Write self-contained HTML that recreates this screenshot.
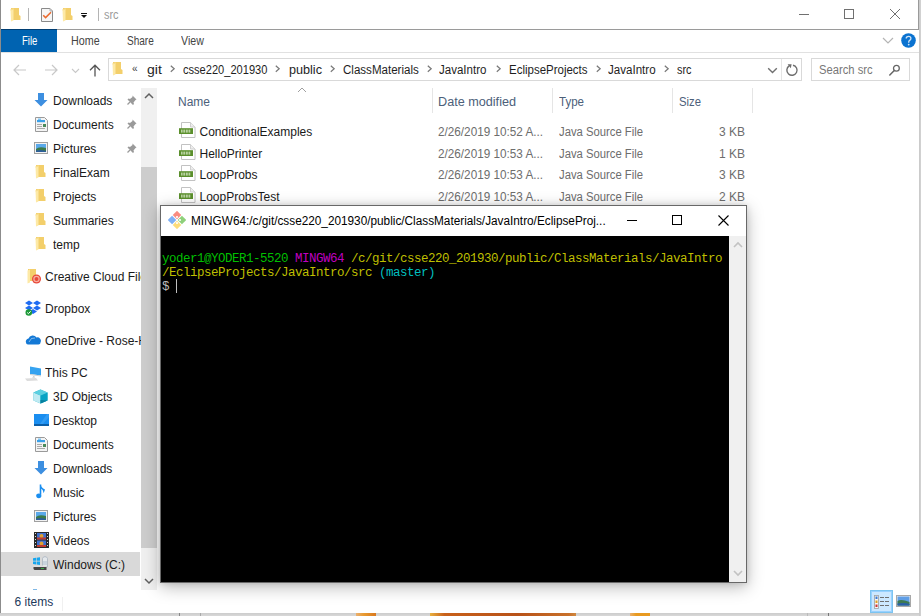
<!DOCTYPE html>
<html><head><meta charset="utf-8">
<style>
*{box-sizing:border-box;margin:0;padding:0}
html,body{width:921px;height:616px;overflow:hidden;background:#fff}
body{position:relative;font-family:"Liberation Sans",sans-serif;font-size:12px;color:#000}
.a{position:absolute}
.t{position:absolute;white-space:nowrap;line-height:14px}
.hl{position:absolute;height:1px}
.vl{position:absolute;width:1px}
.m{position:absolute;white-space:pre;font-family:"Liberation Mono",monospace;font-size:12.5px;letter-spacing:-0.5px;line-height:14px}
</style></head>
<body>
<div class="a" style="left:0;top:612px;width:921px;height:4px;background:linear-gradient(#c8c8c8,#d8d8d8)"></div>
<div class="a" style="left:356px;top:613px;width:20px;height:3px;background:linear-gradient(90deg,#eab070,#e89a30 40%,#d9781e)"></div>
<div class="a" style="left:430px;top:613px;width:146px;height:3px;background:linear-gradient(90deg,#e8b040,#c8601a 10%,#b85218 60%,#c8702a 95%,#d08840)"></div>
<div class="a" style="left:630px;top:613px;width:20px;height:3px;background:linear-gradient(90deg,#eab070,#e89a20 30%,#e89a20)"></div>
<div class="vl" style="left:179px;top:613px;height:3px;background:#888"></div>
<div class="vl" style="left:200px;top:613px;height:3px;background:#aaa"></div>
<div class="vl" style="left:807px;top:613px;height:3px;background:#bbb"></div>
<div class="vl" style="left:828px;top:613px;height:3px;background:#777"></div>
<div class="a" style="left:0;top:0;width:919px;height:613px;background:#fff"></div>
<div class="a" style="left:919px;top:0;width:2px;height:616px;background:linear-gradient(90deg,#c8c8c8,#d4d4d4)"></div>
<div class="vl" style="left:0;top:0;height:613px;background:#8c8c8c"></div>
<div class="hl" style="left:0;top:29px;width:919px;background:#9a9a9a"></div>
<div class="vl" style="left:918px;top:0;height:30px;background:#9a9a9a"></div>
<svg class="a" style="left:10px;top:8px" width="11" height="14" viewBox="0 0 11 14"><path d="M1 0H9V7L10.5 8V12H2Z" fill="#f3cf6b"/><path d="M0.5 1.5L3.5 0.5V12.5L1 13.5Z" fill="#fde9a6"/><path d="M0.5 1.5L3.5 0.5V1.5L0.5 2.5Z" fill="#f7dc8a"/></svg>
<div class="vl" style="left:28px;top:8px;height:13px;background:#b4b4b4"></div>
<svg class="a" style="left:41px;top:8px" width="12" height="15" viewBox="0 0 12 15"><path d="M0.5 0.5H9L11.5 3V13.5H0.5Z" fill="#f6f6f6" stroke="#8a8a8a"/><path d="M9 0.5V3H11.5" fill="none" stroke="#b0b0b0"/></svg>
<svg class="a" style="left:41px;top:8px" width="12" height="15" viewBox="0 0 12 15"><path d="M2.2 7.2L4.6 9.6L10 4.2" stroke="#ea6a2e" stroke-width="1.5" fill="none"/></svg>
<svg class="a" style="left:62px;top:8px" width="11" height="14" viewBox="0 0 11 14"><path d="M1 0H9V7L10.5 8V12H2Z" fill="#f3cf6b"/><path d="M0.5 1.5L3.5 0.5V12.5L1 13.5Z" fill="#fde9a6"/><path d="M0.5 1.5L3.5 0.5V1.5L0.5 2.5Z" fill="#f7dc8a"/></svg>
<div class="a" style="left:81px;top:13px;width:6px;height:1px;background:#111"></div>
<svg class="a" style="left:81px;top:15px" width="6" height="4" viewBox="0 0 6 4"><path d="M0 0 L6 0 L3 3Z" fill="#111"/></svg>
<div class="vl" style="left:98px;top:8px;height:13px;background:#b4b4b4"></div>
<div class="t" style="left:104px;top:7.84px;color:#9b9b9b;font-size:12px;transform:scaleX(0.9125);transform-origin:0 0;">src</div>
<div class="hl" style="left:799px;top:14px;width:10px;background:#707070"></div>
<div class="a" style="left:844px;top:9px;width:10px;height:10px;border:1px solid #707070"></div>
<svg class="a" style="left:890px;top:9px" width="10" height="10" viewBox="0 0 10 10"><path d="M0 0L10 10M10 0L0 10" stroke="#707070" stroke-width="1"/></svg>
<div class="a" style="left:1px;top:29px;width:56px;height:23px;background:#0063b1;border-top:1px solid #003e73"></div>
<div class="t" style="left:21.5px;top:34.34px;color:#fff;font-size:12px;transform:scaleX(0.7961);transform-origin:0 0;">File</div>
<div class="t" style="left:70.7px;top:34.34px;color:#444;font-size:12px;transform:scaleX(0.8933);transform-origin:0 0;">Home</div>
<div class="t" style="left:126.6px;top:34.34px;color:#444;font-size:12px;transform:scaleX(0.8371);transform-origin:0 0;">Share</div>
<div class="t" style="left:181px;top:34.34px;color:#444;font-size:12px;transform:scaleX(0.8838);transform-origin:0 0;">View</div>
<div class="hl" style="left:1px;top:52px;width:918px;background:#e1e1e1"></div>
<svg class="a" style="left:882px;top:37px" width="12" height="8" viewBox="0 0 12 8"><path d="M1 1L6 6L11 1" stroke="#b4b4b4" stroke-width="1.2" fill="none"/></svg>
<svg class="a" style="left:901px;top:33px" width="15" height="15" viewBox="0 0 15 15"><circle cx="7.5" cy="7.5" r="7.3" fill="#0a72d0"/><path d="M5.2 5.6Q5.2 3.4 7.6 3.4Q9.9 3.4 9.9 5.4Q9.9 6.6 8.6 7.4Q7.7 8 7.7 9.2V9.7" stroke="#cfe3f6" stroke-width="1.3" fill="none"/><circle cx="7.7" cy="11.6" r="0.9" fill="#cfe3f6"/></svg>
<svg class="a" style="left:13px;top:64px" width="14" height="12" viewBox="0 0 14 12"><path d="M1 6H13M6 1L1 6L6 11" stroke="#c8c8c8" stroke-width="1.2" fill="none"/></svg>
<svg class="a" style="left:44px;top:64px" width="14" height="12" viewBox="0 0 14 12"><path d="M1 6H13M8 1L13 6L8 11" stroke="#c8c8c8" stroke-width="1.2" fill="none"/></svg>
<svg class="a" style="left:71px;top:68px" width="9" height="6" viewBox="0 0 9 6"><path d="M1 1L4.5 4.5L8 1" stroke="#c8c8c8" stroke-width="1.1" fill="none"/></svg>
<svg class="a" style="left:89px;top:64px" width="12" height="13" viewBox="0 0 12 13"><path d="M6 12.5V1.2M1 6.2L6 1.2L11 6.2" stroke="#555" stroke-width="1.3" fill="none"/></svg>
<div class="a" style="left:108px;top:58px;width:694px;height:23px;border:1px solid #d9d9d9"></div>
<div class="vl" style="left:781px;top:59px;height:21px;background:#e5e5e5"></div>
<svg class="a" style="left:112px;top:62px" width="11" height="14" viewBox="0 0 11 14"><path d="M1 0H9V7L10.5 8V12H2Z" fill="#f3cf6b"/><path d="M0.5 1.5L3.5 0.5V12.5L1 13.5Z" fill="#fde9a6"/><path d="M0.5 1.5L3.5 0.5V1.5L0.5 2.5Z" fill="#f7dc8a"/></svg>
<div class="t" style="left:132px;top:62.03px;color:#444;font-size:10px;">«</div>
<div class="t" style="left:146.7px;top:62.84px;color:#1e1e1e;font-size:12px;transform:scaleX(1.1679);transform-origin:0 0;">git</div>
<div class="t" style="left:182.6px;top:62.84px;color:#1e1e1e;font-size:12px;transform:scaleX(0.9235);transform-origin:0 0;">csse220_201930</div>
<div class="t" style="left:288.6px;top:62.84px;color:#1e1e1e;font-size:12px;transform:scaleX(1.0523);transform-origin:0 0;">public</div>
<div class="t" style="left:342.5px;top:62.84px;color:#1e1e1e;font-size:12px;transform:scaleX(0.9631);transform-origin:0 0;">ClassMaterials</div>
<div class="t" style="left:439.4px;top:62.84px;color:#1e1e1e;font-size:12px;transform:scaleX(0.9606);transform-origin:0 0;">JavaIntro</div>
<div class="t" style="left:508.5px;top:62.84px;color:#1e1e1e;font-size:12px;transform:scaleX(0.9570);transform-origin:0 0;">EclipseProjects</div>
<div class="t" style="left:607.7px;top:62.84px;color:#1e1e1e;font-size:12px;transform:scaleX(0.9647);transform-origin:0 0;">JavaIntro</div>
<div class="t" style="left:676.7px;top:62.84px;color:#1e1e1e;font-size:12px;transform:scaleX(0.9062);transform-origin:0 0;">src</div>
<svg class="a" style="left:170px;top:65px" width="6" height="8" viewBox="0 0 6 8"><path d="M0.8 0.8L4.2 3.8L0.8 6.8" stroke="#777" stroke-width="1.2" fill="none"/></svg>
<svg class="a" style="left:275px;top:65px" width="6" height="8" viewBox="0 0 6 8"><path d="M0.8 0.8L4.2 3.8L0.8 6.8" stroke="#777" stroke-width="1.2" fill="none"/></svg>
<svg class="a" style="left:330px;top:65px" width="6" height="8" viewBox="0 0 6 8"><path d="M0.8 0.8L4.2 3.8L0.8 6.8" stroke="#777" stroke-width="1.2" fill="none"/></svg>
<svg class="a" style="left:427px;top:65px" width="6" height="8" viewBox="0 0 6 8"><path d="M0.8 0.8L4.2 3.8L0.8 6.8" stroke="#777" stroke-width="1.2" fill="none"/></svg>
<svg class="a" style="left:496px;top:65px" width="6" height="8" viewBox="0 0 6 8"><path d="M0.8 0.8L4.2 3.8L0.8 6.8" stroke="#777" stroke-width="1.2" fill="none"/></svg>
<svg class="a" style="left:596px;top:65px" width="6" height="8" viewBox="0 0 6 8"><path d="M0.8 0.8L4.2 3.8L0.8 6.8" stroke="#777" stroke-width="1.2" fill="none"/></svg>
<svg class="a" style="left:664px;top:65px" width="6" height="8" viewBox="0 0 6 8"><path d="M0.8 0.8L4.2 3.8L0.8 6.8" stroke="#777" stroke-width="1.2" fill="none"/></svg>
<svg class="a" style="left:767px;top:67px" width="11" height="7" viewBox="0 0 11 7"><path d="M1.2 1.2L5.5 5.5L9.8 1.2" stroke="#707070" stroke-width="1.4" fill="none"/></svg>
<svg class="a" style="left:785px;top:63px" width="14" height="14" viewBox="0 0 14 14"><path d="M8 2.2A5.1 5.1 0 1 1 4.2 2.9" stroke="#6d6d6d" stroke-width="1.4" fill="none"/><path d="M2.6 1.2L6.6 1.2L5.8 5.2Z" fill="#6d6d6d"/></svg>
<div class="a" style="left:811px;top:58px;width:99px;height:23px;border:1px solid #d9d9d9"></div>
<div class="t" style="left:819px;top:62.84px;color:#777;font-size:12px;transform:scaleX(0.9347);transform-origin:0 0;">Search src</div>
<svg class="a" style="left:888px;top:64px" width="12" height="12" viewBox="0 0 12 12"><circle cx="8.4" cy="4.3" r="2.9" stroke="#666" stroke-width="1.3" fill="none"/><path d="M6.3 6.5L1.8 11" stroke="#666" stroke-width="1.5" stroke-linecap="round"/></svg>
<div class="a" style="left:141px;top:88px;width:16px;height:502px;background:#f0f0f0"></div>
<div class="a" style="left:141px;top:167px;width:16px;height:381px;background:#cdcdcd"></div>
<svg class="a" style="left:144px;top:92px" width="10" height="7" viewBox="0 0 10 7"><path d="M1 6L5 2L9 6" stroke="#606060" stroke-width="1.5" fill="none"/></svg>
<svg class="a" style="left:144px;top:578px" width="10" height="7" viewBox="0 0 10 7"><path d="M1 1L5 5L9 1" stroke="#606060" stroke-width="1.5" fill="none"/></svg>
<div class="a" style="left:1px;top:552px;width:139px;height:24px;background:#d9d9d9"></div>
<div class="t" style="left:53px;top:93.84px;color:#1a1a1a;font-size:12px;width:88px;overflow:hidden">Downloads</div>
<svg class="a" style="left:34px;top:93px" width="14" height="14" viewBox="0 0 14 14"><path d="M4 0H10V7H13.5L7 13.5L0.5 7H4Z" fill="#3d8fe0"/></svg>
<svg class="a" style="left:127px;top:95px" width="10" height="10" viewBox="0 0 10 10"><path d="M5.5 0.5L9.5 4.5L8.5 5L6.5 7.5L7 9L6 10L0.5 4.5L1.5 3.5L3 4L5.5 2Z" fill="#9a9a9a"/><path d="M3 7L0.5 9.5" stroke="#9a9a9a" stroke-width="1.2"/></svg>
<div class="t" style="left:53px;top:117.84px;color:#1a1a1a;font-size:12px;width:88px;overflow:hidden">Documents</div>
<svg class="a" style="left:35px;top:117px" width="13" height="15" viewBox="0 0 13 15"><path d="M0.5 0.5H9.5L12.5 3.5V14.5H0.5Z" fill="#f4f4f4" stroke="#9a9a9a"/><rect x="2" y="3" width="8" height="2.2" fill="#3aa0e8"/><rect x="3" y="1.5" width="3" height="1.5" fill="#7cc4f5"/><rect x="2" y="7" width="5" height="1" fill="#aaa"/><rect x="2" y="9" width="5" height="1" fill="#aaa"/><rect x="2" y="11" width="8" height="1" fill="#aaa"/><rect x="8" y="7" width="3" height="3" fill="#4a8a5a"/></svg>
<svg class="a" style="left:127px;top:119px" width="10" height="10" viewBox="0 0 10 10"><path d="M5.5 0.5L9.5 4.5L8.5 5L6.5 7.5L7 9L6 10L0.5 4.5L1.5 3.5L3 4L5.5 2Z" fill="#9a9a9a"/><path d="M3 7L0.5 9.5" stroke="#9a9a9a" stroke-width="1.2"/></svg>
<div class="t" style="left:53px;top:141.84px;color:#1a1a1a;font-size:12px;width:88px;overflow:hidden">Pictures</div>
<svg class="a" style="left:34px;top:142px" width="14" height="12" viewBox="0 0 14 12"><rect x="0.5" y="0.5" width="13" height="11" fill="#f2f2f2" stroke="#a0a0a0"/><rect x="2" y="2" width="10" height="8" fill="#5aa9ea"/><path d="M2 7Q5 4 12 6V10H2Z" fill="#3c7a4a"/><path d="M2 8.5Q7 7.5 12 9V10H2Z" fill="#2d5f9a"/></svg>
<svg class="a" style="left:127px;top:143px" width="10" height="10" viewBox="0 0 10 10"><path d="M5.5 0.5L9.5 4.5L8.5 5L6.5 7.5L7 9L6 10L0.5 4.5L1.5 3.5L3 4L5.5 2Z" fill="#9a9a9a"/><path d="M3 7L0.5 9.5" stroke="#9a9a9a" stroke-width="1.2"/></svg>
<div class="t" style="left:53px;top:165.84px;color:#1a1a1a;font-size:12px;width:88px;overflow:hidden">FinalExam</div>
<svg class="a" style="left:35px;top:165px" width="11" height="14" viewBox="0 0 11 14"><path d="M1 0H9V7L10.5 8V12H2Z" fill="#f3cf6b"/><path d="M0.5 1.5L3.5 0.5V12.5L1 13.5Z" fill="#fde9a6"/><path d="M0.5 1.5L3.5 0.5V1.5L0.5 2.5Z" fill="#f7dc8a"/></svg>
<div class="t" style="left:53px;top:189.84px;color:#1a1a1a;font-size:12px;width:88px;overflow:hidden">Projects</div>
<svg class="a" style="left:35px;top:189px" width="11" height="14" viewBox="0 0 11 14"><path d="M1 0H9V7L10.5 8V12H2Z" fill="#f3cf6b"/><path d="M0.5 1.5L3.5 0.5V12.5L1 13.5Z" fill="#fde9a6"/><path d="M0.5 1.5L3.5 0.5V1.5L0.5 2.5Z" fill="#f7dc8a"/></svg>
<div class="t" style="left:53px;top:213.84px;color:#1a1a1a;font-size:12px;width:88px;overflow:hidden">Summaries</div>
<svg class="a" style="left:35px;top:213px" width="11" height="14" viewBox="0 0 11 14"><path d="M1 0H9V7L10.5 8V12H2Z" fill="#f3cf6b"/><path d="M0.5 1.5L3.5 0.5V12.5L1 13.5Z" fill="#fde9a6"/><path d="M0.5 1.5L3.5 0.5V1.5L0.5 2.5Z" fill="#f7dc8a"/></svg>
<div class="t" style="left:53px;top:237.84px;color:#1a1a1a;font-size:12px;width:88px;overflow:hidden">temp</div>
<svg class="a" style="left:35px;top:237px" width="11" height="14" viewBox="0 0 11 14"><path d="M1 0H9V7L10.5 8V12H2Z" fill="#f3cf6b"/><path d="M0.5 1.5L3.5 0.5V12.5L1 13.5Z" fill="#fde9a6"/><path d="M0.5 1.5L3.5 0.5V1.5L0.5 2.5Z" fill="#f7dc8a"/></svg>
<div class="t" style="left:45px;top:269.84px;color:#1a1a1a;font-size:12px;width:96px;overflow:hidden">Creative Cloud Files</div>
<svg class="a" style="left:27px;top:269px" width="16" height="16" viewBox="0 0 16 16"><path d="M1 0H9V12H1Z" fill="#f3cf6b"/><path d="M0.5 1.5L3 0.5V13.5L0.5 14.5Z" fill="#fde9a6"/><circle cx="9.5" cy="10" r="4.5" fill="#e8493a"/><circle cx="9.5" cy="10" r="2.6" fill="none" stroke="#f7b0a0" stroke-width="1.2"/></svg>
<div class="t" style="left:45px;top:301.84px;color:#1a1a1a;font-size:12px;width:96px;overflow:hidden">Dropbox</div>
<svg class="a" style="left:25px;top:300px" width="17" height="16" viewBox="0 0 17 16"><path d="M4 0.5L8 3L4 5.5L0 3Z M12 0.5L16 3L12 5.5L8 3Z M4 5.5L8 8L4 10.5L0 8Z M12 5.5L16 8L12 10.5L8 8Z M8 9L12 11.5L8 14L4 11.5Z" fill="#1f6cf2"/><circle cx="3.8" cy="12.5" r="3.3" fill="#1e9a3a"/><path d="M2.2 12.5L3.4 13.7L5.6 11.3" stroke="#fff" stroke-width="1" fill="none"/></svg>
<div class="t" style="left:45px;top:333.84px;color:#1a1a1a;font-size:12px;width:96px;overflow:hidden">OneDrive - Rose-Hulman</div>
<svg class="a" style="left:25px;top:334px" width="16" height="11" viewBox="0 0 16 11"><path d="M1 8.5A3 3 0 0 1 3.5 4.5A4.5 4.5 0 0 1 11.5 3.5A3.5 3.5 0 0 1 15.5 8.5A2 2 0 0 1 13.5 10.5H3A2 2 0 0 1 1 8.5Z" fill="#1479d6"/><path d="M4 8Q6 3 10 4" stroke="#fff" stroke-width="0.8" fill="none" opacity="0.6"/></svg>
<div class="t" style="left:45px;top:365.84px;color:#1a1a1a;font-size:12px;width:96px;overflow:hidden">This PC</div>
<svg class="a" style="left:25px;top:366px" width="17" height="15" viewBox="0 0 17 15"><path d="M5 0.5L16 2.5V9.5L5 8Z" fill="#36a3f0"/><path d="M5 8L16 9.5V10.5L5 9Z" fill="#d0d0d0"/><path d="M0 12.5L11 12L13 14.5L2 15Z" fill="#dcdcdc"/><path d="M9 10L10 11.5H7Z" fill="#bbb"/></svg>
<div class="t" style="left:53px;top:389.84px;color:#1a1a1a;font-size:12px;width:88px;overflow:hidden">3D Objects</div>
<svg class="a" style="left:33px;top:389px" width="15" height="15" viewBox="0 0 15 15"><path d="M7.5 0.5L14.5 3.5V11.5L7.5 14.5L0.5 11.5V3.5Z" fill="#23b6cc"/><path d="M0.5 3.5L7.5 6.5V14.5L0.5 11.5Z" fill="#bfeaf2"/><path d="M7.5 6.5L14.5 3.5V11.5L7.5 14.5Z" fill="#0aa3c4"/><path d="M0.5 3.5L7.5 0.5L14.5 3.5L7.5 6.5Z" fill="#5ccfe0"/><path d="M7.5 11L14.5 11.5L7.5 14.5Z" fill="#087f9e"/></svg>
<div class="t" style="left:53px;top:413.84px;color:#1a1a1a;font-size:12px;width:88px;overflow:hidden">Desktop</div>
<svg class="a" style="left:34px;top:414px" width="15" height="12" viewBox="0 0 15 12"><rect x="0" y="0" width="15" height="12" fill="#1a8ef0"/><rect x="0" y="10" width="15" height="2" fill="#0b5ea8"/><path d="M6 10L13 0H15V3L9 10Z" fill="#4aaaf7" opacity="0.5"/></svg>
<div class="t" style="left:53px;top:437.84px;color:#1a1a1a;font-size:12px;width:88px;overflow:hidden">Documents</div>
<svg class="a" style="left:35px;top:437px" width="13" height="15" viewBox="0 0 13 15"><path d="M0.5 0.5H9.5L12.5 3.5V14.5H0.5Z" fill="#f4f4f4" stroke="#9a9a9a"/><rect x="2" y="3" width="8" height="2.2" fill="#3aa0e8"/><rect x="3" y="1.5" width="3" height="1.5" fill="#7cc4f5"/><rect x="2" y="7" width="5" height="1" fill="#aaa"/><rect x="2" y="9" width="5" height="1" fill="#aaa"/><rect x="2" y="11" width="8" height="1" fill="#aaa"/><rect x="8" y="7" width="3" height="3" fill="#4a8a5a"/></svg>
<div class="t" style="left:53px;top:461.84px;color:#1a1a1a;font-size:12px;width:88px;overflow:hidden">Downloads</div>
<svg class="a" style="left:34px;top:461px" width="14" height="14" viewBox="0 0 14 14"><path d="M4 0H10V7H13.5L7 13.5L0.5 7H4Z" fill="#3d8fe0"/></svg>
<div class="t" style="left:53px;top:485.84px;color:#1a1a1a;font-size:12px;width:88px;overflow:hidden">Music</div>
<svg class="a" style="left:36px;top:484px" width="10" height="15" viewBox="0 0 10 15"><path d="M4.5 0.5V10.5" stroke="#1a8ef0" stroke-width="1.6"/><ellipse cx="2.8" cy="11.8" rx="2.6" ry="2.4" fill="#1a8ef0"/><path d="M4.5 0.5Q5 3.5 9 5.5Q8.5 8 7 9Q8 6 4.5 4.5Z" fill="#1a8ef0"/></svg>
<div class="t" style="left:53px;top:509.84px;color:#1a1a1a;font-size:12px;width:88px;overflow:hidden">Pictures</div>
<svg class="a" style="left:34px;top:510px" width="14" height="12" viewBox="0 0 14 12"><rect x="0.5" y="0.5" width="13" height="11" fill="#f2f2f2" stroke="#a0a0a0"/><rect x="2" y="2" width="10" height="8" fill="#5aa9ea"/><path d="M2 7Q5 4 12 6V10H2Z" fill="#3c7a4a"/><path d="M2 8.5Q7 7.5 12 9V10H2Z" fill="#2d5f9a"/></svg>
<div class="t" style="left:53px;top:533.84px;color:#1a1a1a;font-size:12px;width:88px;overflow:hidden">Videos</div>
<svg class="a" style="left:34px;top:532px" width="15" height="16" viewBox="0 0 15 16"><rect x="0" y="0" width="15" height="16" fill="#2a2a2a"/><rect x="3" y="1" width="9" height="6.5" fill="#3e6fd0"/><rect x="3" y="8.5" width="9" height="6.5" fill="#3e6fd0"/><circle cx="7.5" cy="4" r="2" fill="#e0a030"/><circle cx="7.5" cy="11.5" r="2" fill="#e0a030"/><rect x="3" y="5.5" width="9" height="2" fill="#c03a30"/><rect x="3" y="13" width="9" height="2" fill="#c03a30"/><g fill="#ddd"><rect x="1" y="1" width="1" height="1"/><rect x="1" y="4" width="1" height="1"/><rect x="1" y="7" width="1" height="1"/><rect x="1" y="10" width="1" height="1"/><rect x="1" y="13" width="1" height="1"/><rect x="13" y="1" width="1" height="1"/><rect x="13" y="4" width="1" height="1"/><rect x="13" y="7" width="1" height="1"/><rect x="13" y="10" width="1" height="1"/><rect x="13" y="13" width="1" height="1"/></g></svg>
<div class="t" style="left:53px;top:557.84px;color:#1a1a1a;font-size:12px;width:88px;overflow:hidden">Windows (C:)</div>
<svg class="a" style="left:32px;top:556px" width="18" height="16" viewBox="0 0 18 16"><g fill="#16a6ee"><path d="M1 2.2L4 1.8V4.8H1Z"/><path d="M4.6 1.7L8 1.2V4.8H4.6Z"/><path d="M1 5.4H4V8.4L1 8Z"/><path d="M4.6 5.4H8V9L4.6 8.5Z"/></g><path d="M10.5 2.5A2.6 2.6 0 0 1 15.5 2.5V11H10.5Z" fill="#e4e8ec" stroke="#a9b4bf" stroke-width="0.8"/><path d="M11 6H15M11 8H15" stroke="#9fb6c9" stroke-width="0.8"/><path d="M1 9.5H13L14.5 11H2.5Z" fill="#e0e0e0"/><path d="M1.5 11H14.5V14H2.5L1.5 13Z" fill="#454545"/><rect x="9" y="12" width="3" height="1" fill="#3cb04a"/></svg>
<div class="t" style="left:178.3px;top:95.04px;color:#4c607a;font-size:12px;transform:scaleX(0.9995);transform-origin:0 0;">Name</div>
<div class="t" style="left:438.4px;top:95.04px;color:#4c607a;font-size:12px;transform:scaleX(1.0536);transform-origin:0 0;">Date modified</div>
<div class="t" style="left:558.5px;top:95.04px;color:#4c607a;font-size:12px;transform:scaleX(0.9610);transform-origin:0 0;">Type</div>
<div class="t" style="left:678.7px;top:95.04px;color:#4c607a;font-size:12px;transform:scaleX(0.9424);transform-origin:0 0;">Size</div>
<div class="vl" style="left:432px;top:88px;height:25px;background:#e5e5e5"></div>
<div class="vl" style="left:552px;top:88px;height:25px;background:#e5e5e5"></div>
<div class="vl" style="left:672px;top:88px;height:25px;background:#e5e5e5"></div>
<div class="vl" style="left:752px;top:88px;height:25px;background:#e5e5e5"></div>
<svg class="a" style="left:297px;top:87px" width="10" height="6" viewBox="0 0 10 6"><path d="M1 5L5 1L9 5" stroke="#a0a0a0" stroke-width="1" fill="none"/></svg>
<svg class="a" style="left:179px;top:122.2px" width="17" height="17" viewBox="0 0 17 17"><path d="M2.5 0.5H11.5L16 5V15.5H2.5Z" fill="#fff" stroke="#c2c2c2"/><path d="M11.5 0.5V5H16" fill="#eee" stroke="#d0d0d0"/><rect x="0" y="6.2" width="14" height="5.8" fill="#5b8f2c"/><g fill="#b9d3a2"><rect x="2" y="7.6" width="1.6" height="3"/><rect x="4.3" y="7.6" width="1.8" height="3"/><rect x="6.8" y="7.6" width="2" height="3"/><rect x="9.5" y="7.6" width="1.8" height="3"/></g></svg>
<div class="t" style="left:199.5px;top:125.24px;color:#1a1a1a;font-size:12px;">ConditionalExamples</div>
<div class="t" style="left:438.4px;top:125.24px;color:#6d6d6d;font-size:12px;transform:scaleX(0.9780);transform-origin:0 0;">2/26/2019 10:52 A...</div>
<div class="t" style="left:558.5px;top:125.24px;color:#6d6d6d;font-size:12px;transform:scaleX(0.9400);transform-origin:0 0;">Java Source File</div>
<div class="t" style="left:700px;width:45px;text-align:right;top:125.24px;color:#6d6d6d">3 KB</div>
<svg class="a" style="left:179px;top:143.7px" width="17" height="17" viewBox="0 0 17 17"><path d="M2.5 0.5H11.5L16 5V15.5H2.5Z" fill="#fff" stroke="#c2c2c2"/><path d="M11.5 0.5V5H16" fill="#eee" stroke="#d0d0d0"/><rect x="0" y="6.2" width="14" height="5.8" fill="#5b8f2c"/><g fill="#b9d3a2"><rect x="2" y="7.6" width="1.6" height="3"/><rect x="4.3" y="7.6" width="1.8" height="3"/><rect x="6.8" y="7.6" width="2" height="3"/><rect x="9.5" y="7.6" width="1.8" height="3"/></g></svg>
<div class="t" style="left:199.5px;top:146.74px;color:#1a1a1a;font-size:12px;">HelloPrinter</div>
<div class="t" style="left:438.4px;top:146.74px;color:#6d6d6d;font-size:12px;transform:scaleX(0.9780);transform-origin:0 0;">2/26/2019 10:53 A...</div>
<div class="t" style="left:558.5px;top:146.74px;color:#6d6d6d;font-size:12px;transform:scaleX(0.9400);transform-origin:0 0;">Java Source File</div>
<div class="t" style="left:700px;width:45px;text-align:right;top:146.74px;color:#6d6d6d">1 KB</div>
<svg class="a" style="left:179px;top:165.2px" width="17" height="17" viewBox="0 0 17 17"><path d="M2.5 0.5H11.5L16 5V15.5H2.5Z" fill="#fff" stroke="#c2c2c2"/><path d="M11.5 0.5V5H16" fill="#eee" stroke="#d0d0d0"/><rect x="0" y="6.2" width="14" height="5.8" fill="#5b8f2c"/><g fill="#b9d3a2"><rect x="2" y="7.6" width="1.6" height="3"/><rect x="4.3" y="7.6" width="1.8" height="3"/><rect x="6.8" y="7.6" width="2" height="3"/><rect x="9.5" y="7.6" width="1.8" height="3"/></g></svg>
<div class="t" style="left:199.5px;top:168.24px;color:#1a1a1a;font-size:12px;">LoopProbs</div>
<div class="t" style="left:438.4px;top:168.24px;color:#6d6d6d;font-size:12px;transform:scaleX(0.9780);transform-origin:0 0;">2/26/2019 10:53 A...</div>
<div class="t" style="left:558.5px;top:168.24px;color:#6d6d6d;font-size:12px;transform:scaleX(0.9400);transform-origin:0 0;">Java Source File</div>
<div class="t" style="left:700px;width:45px;text-align:right;top:168.24px;color:#6d6d6d">3 KB</div>
<svg class="a" style="left:179px;top:186.7px" width="17" height="17" viewBox="0 0 17 17"><path d="M2.5 0.5H11.5L16 5V15.5H2.5Z" fill="#fff" stroke="#c2c2c2"/><path d="M11.5 0.5V5H16" fill="#eee" stroke="#d0d0d0"/><rect x="0" y="6.2" width="14" height="5.8" fill="#5b8f2c"/><g fill="#b9d3a2"><rect x="2" y="7.6" width="1.6" height="3"/><rect x="4.3" y="7.6" width="1.8" height="3"/><rect x="6.8" y="7.6" width="2" height="3"/><rect x="9.5" y="7.6" width="1.8" height="3"/></g></svg>
<div class="t" style="left:199.5px;top:189.74px;color:#1a1a1a;font-size:12px;">LoopProbsTest</div>
<div class="t" style="left:438.4px;top:189.74px;color:#6d6d6d;font-size:12px;transform:scaleX(0.9780);transform-origin:0 0;">2/26/2019 10:53 A...</div>
<div class="t" style="left:558.5px;top:189.74px;color:#6d6d6d;font-size:12px;transform:scaleX(0.9400);transform-origin:0 0;">Java Source File</div>
<div class="t" style="left:700px;width:45px;text-align:right;top:189.74px;color:#6d6d6d">2 KB</div>
<div class="t" style="left:14.6px;top:594.84px;color:#1e395b;font-size:12px;">6 items</div>
<div class="a" style="left:33px;top:589px;width:4px;height:1px;background:#7fb8e6"></div>
<div class="vl" style="left:62px;top:597px;height:14px;background:#f0f0f0"></div>
<div class="a" style="left:870px;top:590px;width:23px;height:23px;background:#cce8ff;border:1px solid #7cc4f0;box-shadow:inset 0 0 0 1px #99d1ff"></div>
<svg class="a" style="left:874px;top:595px" width="16" height="14" viewBox="0 0 16 14"><rect x="0.5" y="0.5" width="4" height="13" fill="#f4f4f4" stroke="#a0a0a0" stroke-width="0.8"/><rect x="1.5" y="1.5" width="2" height="2.5" fill="#3a7bd5"/><rect x="1.5" y="5.5" width="2" height="2.5" fill="#e0a020"/><rect x="1.5" y="9.5" width="2" height="2.5" fill="#d03030"/><g fill="#707070"><rect x="6" y="2" width="4" height="1"/><rect x="11" y="2" width="4" height="1"/><rect x="6" y="6" width="4" height="1"/><rect x="11" y="6" width="4" height="1"/><rect x="6" y="10" width="4" height="1"/><rect x="11" y="10" width="4" height="1"/></g></svg>
<svg class="a" style="left:896px;top:595px" width="15" height="12" viewBox="0 0 15 12"><rect x="0.5" y="0.5" width="14" height="11" fill="#eee" stroke="#a8a8a8"/><rect x="1.5" y="1.5" width="12" height="9" fill="#5f9ee6"/><path d="M1.5 6Q5 3.5 13.5 7V10.5H1.5Z" fill="#3d7a52"/><path d="M1.5 8.5Q8 7.5 13.5 9V10.5H1.5Z" fill="#2a5fa8"/></svg>
<div class="a" style="left:160px;top:205px;width:587px;height:378px;box-shadow:0 4px 16px rgba(0,0,0,0.28),0 0 6px rgba(0,0,0,0.12)"></div>
<div class="a" style="left:160px;top:205px;width:587px;height:378px;background:#fff;border:1px solid #686868"></div>
<div class="a" style="left:161px;top:236px;width:568px;height:346px;background:#000"></div>
<div class="a" style="left:729px;top:236px;width:17px;height:346px;background:#f0f0f0"></div>
<svg class="a" style="left:733px;top:241px" width="10" height="7" viewBox="0 0 10 7"><path d="M1 6L5 2L9 6" stroke="#c2c2c2" stroke-width="1.6" fill="none"/></svg>
<svg class="a" style="left:733px;top:570px" width="10" height="7" viewBox="0 0 10 7"><path d="M1 1L5 5L9 1" stroke="#c2c2c2" stroke-width="1.6" fill="none"/></svg>
<svg class="a" style="left:168px;top:211px" width="18" height="18" viewBox="0 0 18 18"><g transform="rotate(45 9 9)"><rect x="2.5" y="2.5" width="6" height="6" fill="#f98b80"/><rect x="9.5" y="2.5" width="6" height="6" fill="#8ed07a"/><rect x="9.5" y="9.5" width="6" height="6" fill="#fddc7a"/><rect x="2.5" y="9.5" width="6" height="6" fill="#7fb0f5"/></g><circle cx="9" cy="6" r="1.1" fill="#fff"/><circle cx="12" cy="9" r="1.1" fill="#fff"/><circle cx="9" cy="12" r="1.1" fill="#fff"/></svg>
<div class="t" style="left:190.6px;top:213.84px;color:#000;font-size:12px;transform:scaleX(0.9822);transform-origin:0 0;">MINGW64:/c/git/csse220_201930/public/ClassMaterials/JavaIntro/EclipseProj...</div>
<div class="hl" style="left:627px;top:220px;width:10px;background:#000"></div>
<div class="a" style="left:672px;top:215px;width:10px;height:10px;border:1px solid #000"></div>
<svg class="a" style="left:718px;top:215px" width="11" height="11" viewBox="0 0 11 11"><path d="M0.5 0.5L10.5 10.5M10.5 0.5L0.5 10.5" stroke="#000" stroke-width="1.1"/></svg>
<div class="m" style="left:162px;top:252px"><span style="color:#00bf00">yoder1@YODER1-5520 </span><span style="color:#bf00bf">MINGW64 </span><span style="color:#bfbf00">/c/git/csse220_201930/public/ClassMaterials/JavaIntro</span></div>
<div class="m" style="left:162px;top:266px"><span style="color:#bfbf00">/EclipseProjects/JavaIntro/src</span><span style="color:#bfbfbf"> </span><span style="color:#00bfbf">(master)</span></div>
<div class="m" style="left:162px;top:280px"><span style="color:#bfbfbf">$ </span></div>
<div class="a" style="left:176px;top:279px;width:1px;height:14px;background:#bfbfbf"></div>
</body></html>
